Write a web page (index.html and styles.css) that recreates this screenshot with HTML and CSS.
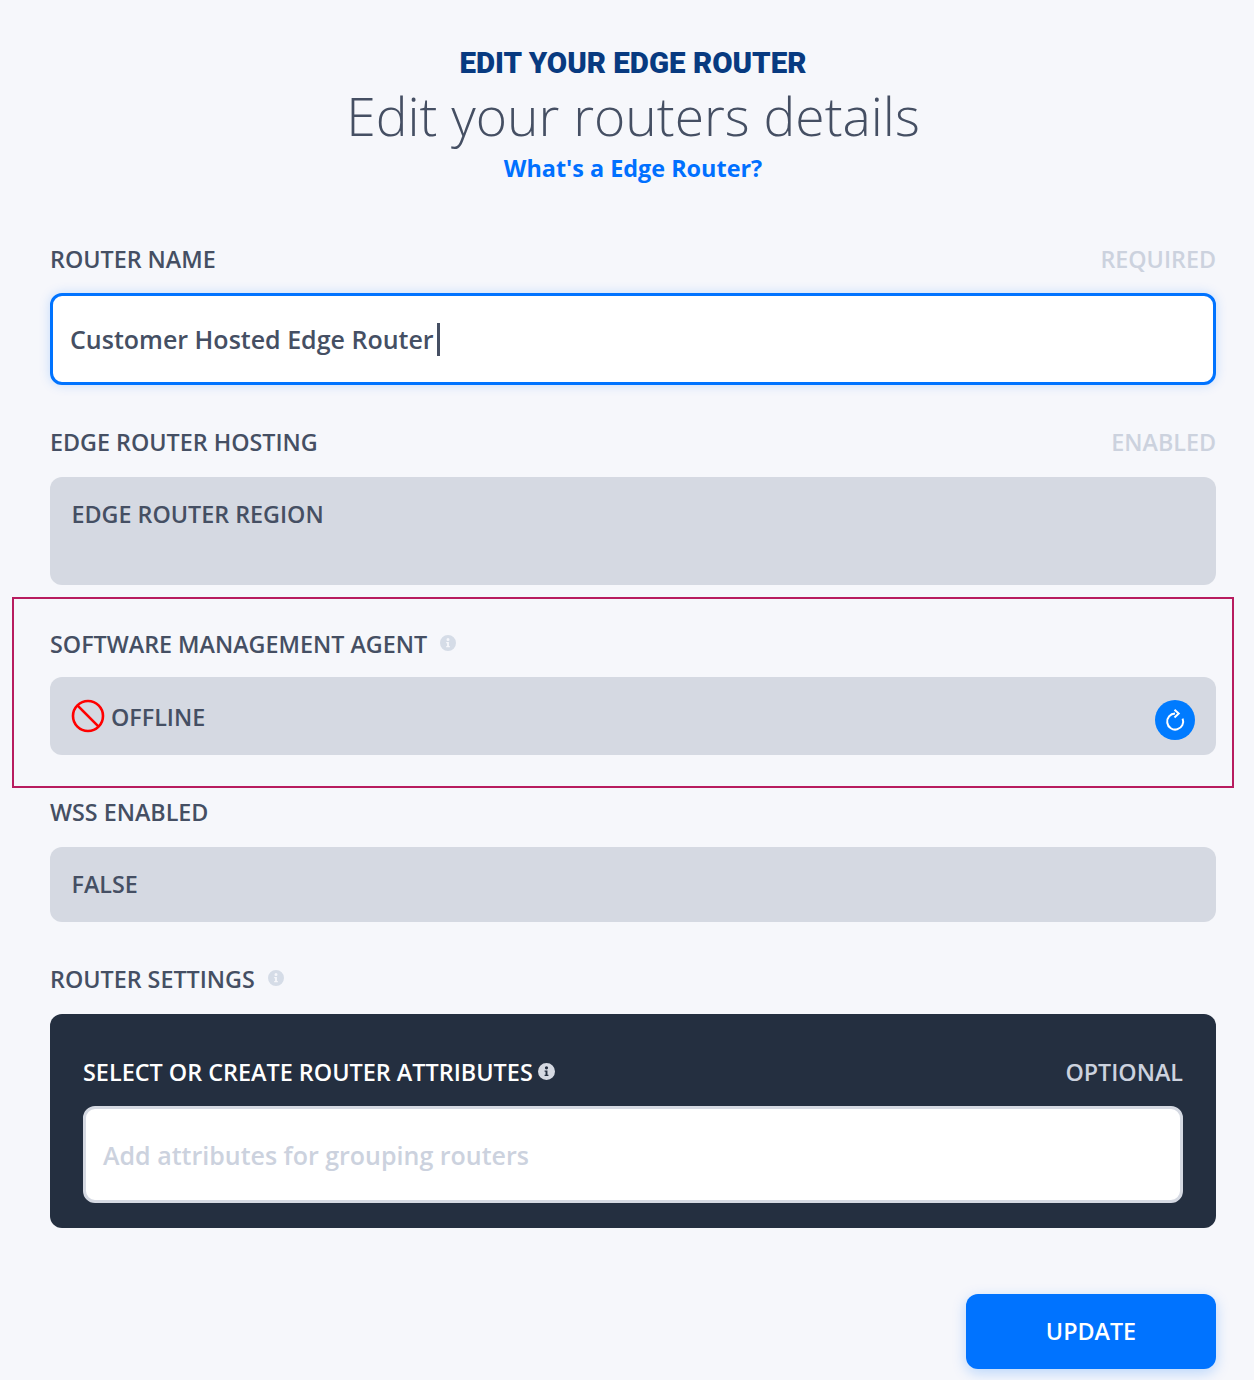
FILE: index.html
```html
<!DOCTYPE html>
<html lang="en">
<head>
    <meta charset="UTF-8">
    <title>Edit your edge router</title>
    <link rel="stylesheet" href="styles.css">
</head>
<body>
    <div class="form-page">
        <!-- Header -->
        <div class="form-head">
            <div class="eyebrow">EDIT YOUR EDGE ROUTER</div>
            <h1>Edit your routers details</h1>
            <a class="help-link" href="#">What's a Edge Router?</a>
        </div>

        <!-- Router name -->
        <div class="label-row label-name">
            <span class="label">ROUTER NAME</span>
            <span class="hint">REQUIRED</span>
        </div>
        <div class="name-input"><span>Customer Hosted Edge Router</span><i class="caret"></i></div>

        <!-- Hosting -->
        <div class="label-row label-hosting">
            <span class="label">EDGE ROUTER HOSTING</span>
            <span class="hint">ENABLED</span>
        </div>
        <div class="read-box region-box">EDGE ROUTER REGION</div>

        <!-- Agent, outlined -->
        <div class="agent-frame">
            <div class="label-row">
                <span class="label">SOFTWARE MANAGEMENT AGENT</span>
                <svg class="info info-light" viewBox="0 0 16 16"><use href="#info-glyph"></use></svg>
            </div>
            <div class="read-box agent-box">
                <svg class="offline-icon" viewBox="0 0 34 34">
                    <circle cx="17" cy="17" r="15" fill="none" stroke="#ff0000" stroke-width="2.6"></circle>
                    <path d="M6.4 6.4L27.6 27.6" stroke="#ff0000" stroke-width="2.6"></path>
                </svg>
                <span class="agent-status">OFFLINE</span>
                <button class="refresh-btn" type="button">
                    <svg viewBox="0 0 40 40" width="40" height="40">
                        <path d="M20 13.6a8 8 0 1 0 7.6 5" fill="none" stroke="#fff" stroke-width="2"></path>
                        <path d="M19.5 9.8l4.2 3.8-4.2 3.8" fill="none" stroke="#fff" stroke-width="2"></path>
                    </svg>
                </button>
            </div>
        </div>

        <!-- WSS -->
        <div class="label-row label-wss">
            <span class="label">WSS ENABLED</span>
        </div>
        <div class="read-box wss-box">FALSE</div>

        <!-- Settings -->
        <div class="label-row label-settings">
            <span class="label">ROUTER SETTINGS</span>
            <svg class="info info-light" viewBox="0 0 16 16"><use href="#info-glyph"></use></svg>
        </div>
        <div class="settings-panel">
            <div class="label-row">
                <span class="panel-label">SELECT OR CREATE ROUTER ATTRIBUTES</span>
                <svg class="info info-panel" viewBox="0 0 16 16"><use href="#info-glyph"></use></svg>
                <span class="panel-hint">OPTIONAL</span>
            </div>
            <div class="attr-input">Add attributes for grouping routers</div>
        </div>

        <div class="actions">
            <button class="update-btn" type="button">UPDATE</button>
        </div>
    </div>

    <svg width="0" height="0" class="defs">
        <symbol id="info-glyph" viewBox="0 0 16 16">
            <path fill="currentColor" fill-rule="evenodd" d="M8 0a8 8 0 1 1 0 16A8 8 0 0 1 8 0zM8 3a1.5 1.5 0 1 0 0 3 1.5 1.5 0 0 0 0-3zM6.2 7v1.2h.9v2.9h-.9v1.2h3.6v-1.2h-.9V7z"></path>
        </symbol>
    </svg>
</body>
</html>
```

FILE: styles.css
```css
/* === Base === */
html, body {
    margin: 0;
    padding: 0;
}

body {
    background: #f6f7fb;
    color: #454f63;
    font-family: 'Open Sans', sans-serif;
    height: 1380px;
    overflow: hidden;
}

.defs {
    position: absolute;
}

.form-page {
    padding: 0 38px 0 50px;
}

/* === Header === */
.form-head {
    padding-top: 45px;
    text-align: center;
}

.eyebrow {
    color: #083a80;
    font-family: 'Roboto', sans-serif;
    font-size: 29.5px;
    font-weight: 900;
    line-height: 36px;
}

h1 {
    margin: 0;
    font-size: 53.4px;
    font-weight: 300;
    line-height: 70px;
    color: #454f63;
}

.help-link {
    display: block;
    color: #0070ff;
    font-size: 23.4px;
    font-weight: 700;
    line-height: 35px;
    text-decoration: none;
}

/* === Labels === */
.label-row {
    display: flex;
    align-items: center;
    height: 30px;
}

.label {
    font-size: 23.3px;
    font-weight: 600;
}

.hint {
    margin-left: auto;
    color: #ccd2de;
    font-size: 23.3px;
    font-weight: 600;
}

.label-name {
    margin-top: 58px;
}

.label-hosting {
    margin-top: 42px;
}

.label-wss {
    margin-top: 9px;
}

.label-settings {
    margin-top: 42px;
}

.info {
    width: 16px;
    height: 16px;
    margin-top: -2px;
    margin-left: 13px;
}

.info-light {
    color: #d5dce7;
}

/* === Fields === */
.name-input {
    display: flex;
    align-items: center;
    box-sizing: border-box;
    height: 92px;
    margin-top: 19px;
    padding: 0 17px;
    background: #fff;
    border: 3px solid #0073ff;
    border-radius: 12px;
    box-shadow: 0 0 12px rgba(0, 115, 255, 0.2);
    font-size: 25px;
    font-weight: 600;
}

.caret {
    width: 3px;
    height: 33px;
    margin-left: 3px;
    background: #454f63;
}

.read-box {
    background: #d5d9e2;
    border-radius: 12px;
    font-size: 23.3px;
    font-weight: 600;
}

.region-box {
    box-sizing: border-box;
    height: 108px;
    margin-top: 20px;
    padding: 22px 21.5px 0;
    line-height: 31px;
}

/* === Agent frame === */
.agent-frame {
    margin: 12px -18px 0 -38px;
    padding: 30px 16px 31px 36px;
    border: 2px solid #b81c5f;
}

.agent-box {
    display: flex;
    align-items: center;
    height: 78px;
    margin-top: 18px;
    padding: 0 21px;
}

.offline-icon {
    width: 34px;
    height: 34px;
    margin-right: 6px;
}

.agent-status {
    margin-top: 2px;
}

.refresh-btn {
    width: 40px;
    height: 40px;
    margin: 8px 0 0 auto;
    padding: 0;
    border: 0;
    border-radius: 50%;
    background: #007bff;
}

.refresh-btn svg {
    display: block;
}

.wss-box {
    display: flex;
    align-items: center;
    box-sizing: border-box;
    height: 75px;
    margin-top: 20px;
    padding: 0 21.5px 2px;
}

/* === Settings panel === */
.settings-panel {
    box-sizing: border-box;
    height: 214px;
    margin-top: 20px;
    padding: 43px 33px 0;
    background: #242f40;
    border-radius: 12px;
}

.panel-label {
    color: #fff;
    font-size: 23.4px;
    font-weight: 600;
}

.info-panel {
    margin-left: 5px;
    margin-top: -1px;
    width: 17px;
    height: 17px;
    color: #d5d9e2;
}

.panel-hint {
    margin-left: auto;
    color: #ccd2de;
    font-size: 23.3px;
    font-weight: 600;
}

.attr-input {
    display: flex;
    align-items: center;
    box-sizing: border-box;
    height: 97px;
    margin-top: 19px;
    padding: 0 17px;
    background: #fff;
    border: 3px solid #d5d9e2;
    border-radius: 12px;
    color: #ccd2de;
    font-size: 25px;
    font-weight: 600;
}

/* === Actions === */
.actions {
    display: flex;
    justify-content: flex-end;
    margin-top: 66px;
}

.update-btn {
    width: 250px;
    height: 75px;
    padding: 0 0 2px;
    border: 0;
    border-radius: 12px;
    background: #0073ff;
    box-shadow: 0 4px 14px rgba(0, 115, 255, 0.25);
    color: #fff;
    font-family: 'Open Sans', sans-serif;
    font-size: 23.3px;
    font-weight: 600;
}
```
